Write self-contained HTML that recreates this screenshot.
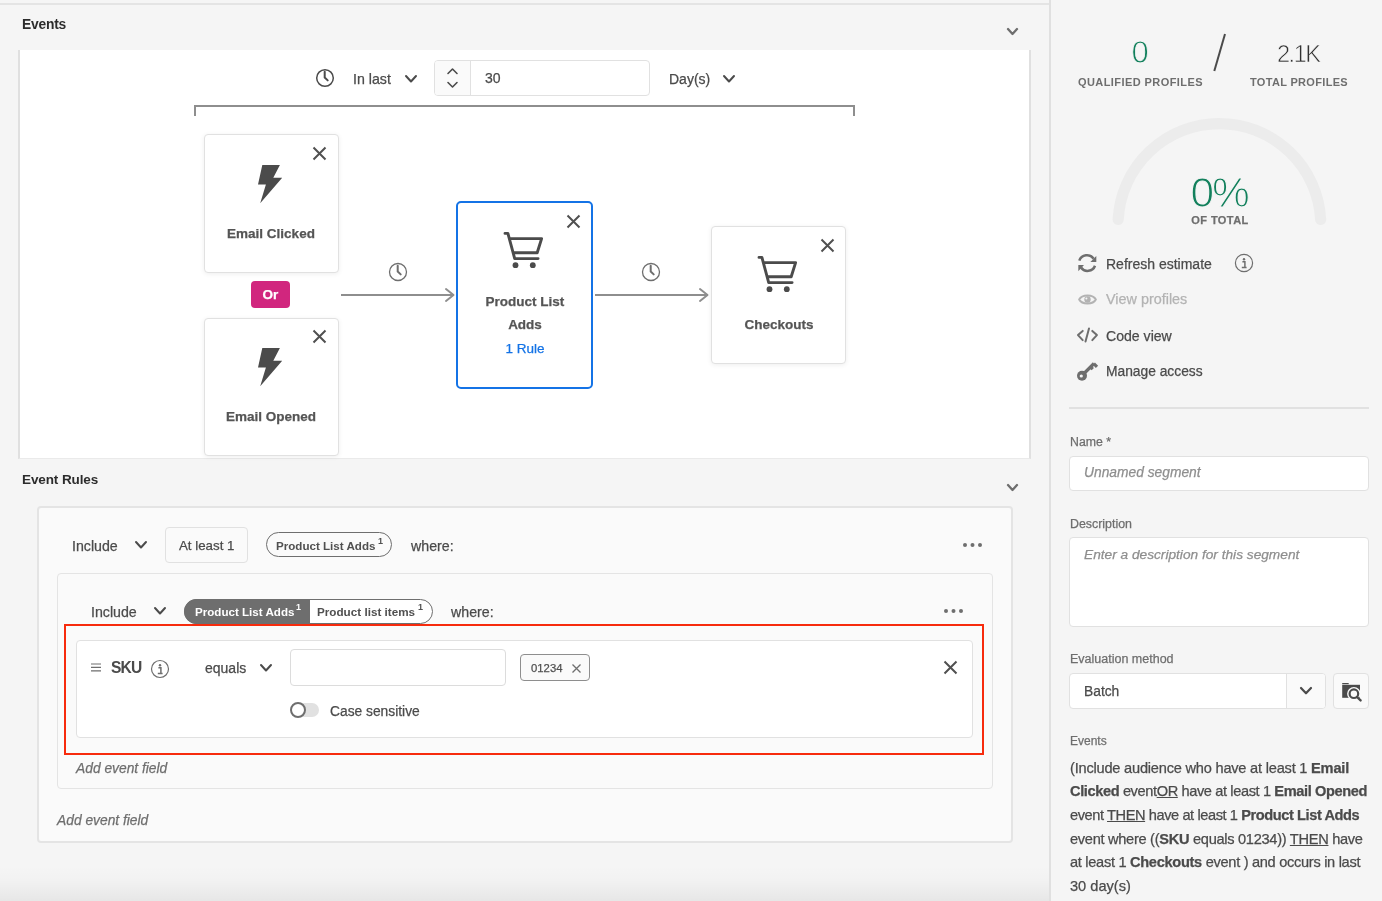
<!DOCTYPE html><html><head><meta charset="utf-8"><style>
html,body{margin:0;padding:0;width:1382px;height:901px;overflow:hidden;background:#f5f5f5;font-family:"Liberation Sans", sans-serif;}
.t{position:absolute;line-height:1;white-space:nowrap;will-change:transform;-webkit-text-stroke:0.25px currentColor;}
svg{overflow:visible}
</style></head><body>
<div style="position:absolute;left:0px;top:0px;width:1049px;height:901px;box-sizing:border-box;background:#f5f5f5"></div>
<div style="position:absolute;left:0px;top:3px;width:1049px;height:2px;box-sizing:border-box;background:#e4e4e4"></div>
<div style="position:absolute;left:0px;top:866px;width:1049px;height:35px;box-sizing:border-box;background:linear-gradient(to bottom, rgba(0,0,0,0) 0%, rgba(0,0,0,0.012) 40%, rgba(0,0,0,0.06) 100%)"></div>
<div style="position:absolute;left:1049px;top:0px;width:2px;height:901px;box-sizing:border-box;background:#e0e0e0"></div>
<div class="t" style="left:22px;top:17.62px;font-size:13.8px;font-weight:700;color:#2c2c2c;font-style:normal;letter-spacing:-0.200px;-webkit-text-stroke:0;">Events</div>
<svg style="position:absolute;left:1006.0px;top:26.7px;" width="13" height="9" viewBox="0 0 13 9" fill="none"><path d="M2 2 L6.5 7 L11 2" stroke="#6e6e6e" stroke-width="2.3" stroke-linecap="round" stroke-linejoin="round"/></svg>
<div style="position:absolute;left:18px;top:50px;width:1013px;height:409px;box-sizing:border-box;background:#fff;border-left:2px solid #e0e0e0;border-right:2px solid #e0e0e0;border-bottom:1px solid #eaeaea"></div>
<svg style="position:absolute;left:314.0px;top:67.0px;" width="22" height="22" viewBox="0 0 22 22" fill="none"><circle cx="11.0" cy="11.0" r="8.3" stroke="#4b4b4b" stroke-width="1.5"/><path d="M10.7 4.8 L10.7 10.5 L13.7 13.4" stroke="#4b4b4b" stroke-width="2" stroke-linecap="round" stroke-linejoin="round"/></svg>
<div class="t" style="left:353px;top:71.98px;font-size:14.2px;font-weight:400;color:#4b4b4b;font-style:normal;letter-spacing:0.000px;">In last</div>
<svg style="position:absolute;left:403.5px;top:73.75px;" width="14" height="9.5" viewBox="0 0 14 9.5" fill="none"><path d="M2 2 L7.0 7.5 L12 2" stroke="#4b4b4b" stroke-width="2" stroke-linecap="round" stroke-linejoin="round"/></svg>
<div style="position:absolute;left:434px;top:60px;width:216px;height:36px;box-sizing:border-box;border:1px solid #e1e1e1;border-radius:4px;background:#fff"></div>
<div style="position:absolute;left:435px;top:61px;width:36px;height:34px;box-sizing:border-box;background:#fafafa;border-right:1px solid #e1e1e1;border-radius:3px 0 0 3px"></div>
<svg style="position:absolute;left:446px;top:67px;" width="12" height="22" viewBox="0 0 12 22" fill="none"><path d="M2 6.5 L6.5 2 L11 6.5 M2 15.5 L6.5 20 L11 15.5" stroke="#4b4b4b" stroke-width="1.6" stroke-linecap="round" stroke-linejoin="round"/></svg>
<div class="t" style="left:485px;top:71.35px;font-size:14px;font-weight:400;color:#4b4b4b;font-style:normal;letter-spacing:0.000px;">30</div>
<div class="t" style="left:669px;top:72.15px;font-size:14px;font-weight:400;color:#4b4b4b;font-style:normal;letter-spacing:0.000px;">Day(s)</div>
<svg style="position:absolute;left:722.0px;top:73.75px;" width="14" height="9.5" viewBox="0 0 14 9.5" fill="none"><path d="M2 2 L7.0 7.5 L12 2" stroke="#4b4b4b" stroke-width="2" stroke-linecap="round" stroke-linejoin="round"/></svg>
<div style="position:absolute;left:194px;top:105px;width:661px;height:2px;box-sizing:border-box;background:#8e8e8e"></div>
<div style="position:absolute;left:194px;top:105px;width:2px;height:11px;box-sizing:border-box;background:#8e8e8e"></div>
<div style="position:absolute;left:853px;top:105px;width:2px;height:11px;box-sizing:border-box;background:#8e8e8e"></div>
<div style="position:absolute;left:204px;top:134px;width:135px;height:139px;box-sizing:border-box;background:#fff;border:1px solid #e1e1e1;border-radius:4px;box-shadow:0 1px 5px rgba(0,0,0,0.07)"></div>
<svg style="position:absolute;left:312px;top:146px;" width="15" height="15" viewBox="0 0 15 15" fill="none"><path d="M1.5 1.5 L13.5 13.5 M13.5 1.5 L1.5 13.5" stroke="#505050" stroke-width="2" stroke-linecap="butt"/></svg>
<svg style="position:absolute;left:256.8px;top:163.9px;" width="27" height="41" viewBox="0 0 27 41" fill="none"><polygon points="5.3,1.0 22.9,1.0 16.3,13.8 25.2,13.8 3.2,39.2 8.9,20.6 1.0,20.6" fill="#4b4b4b"/></svg>
<div class="t" style="left:206.0px;width:130px;text-align:center;top:226.87px;font-size:13.5px;font-weight:700;color:#555;font-style:normal;letter-spacing:0px;">Email Clicked</div>
<div style="position:absolute;left:251px;top:281px;width:39px;height:27px;box-sizing:border-box;background:#d1267e;border-radius:4px"></div>
<div class="t" style="left:251.0px;width:39px;text-align:center;top:287.97px;font-size:13.5px;font-weight:700;color:#fff;font-style:normal;letter-spacing:0px;">Or</div>
<div style="position:absolute;left:204px;top:318px;width:135px;height:138px;box-sizing:border-box;background:#fff;border:1px solid #e1e1e1;border-radius:4px;box-shadow:0 1px 5px rgba(0,0,0,0.07)"></div>
<svg style="position:absolute;left:312px;top:329px;" width="15" height="15" viewBox="0 0 15 15" fill="none"><path d="M1.5 1.5 L13.5 13.5 M13.5 1.5 L1.5 13.5" stroke="#505050" stroke-width="2" stroke-linecap="butt"/></svg>
<svg style="position:absolute;left:256.8px;top:346.5px;" width="27" height="41" viewBox="0 0 27 41" fill="none"><polygon points="5.3,1.0 22.9,1.0 16.3,13.8 25.2,13.8 3.2,39.2 8.9,20.6 1.0,20.6" fill="#4b4b4b"/></svg>
<div class="t" style="left:206.0px;width:130px;text-align:center;top:410.07px;font-size:13.5px;font-weight:700;color:#555;font-style:normal;letter-spacing:0px;">Email Opened</div>
<div style="position:absolute;left:341px;top:294px;width:112px;height:2px;box-sizing:border-box;background:#8e8e8e"></div>
<svg style="position:absolute;left:444px;top:287px;" width="12" height="16" viewBox="0 0 12 16" fill="none"><path d="M2 2 L9.5 8 L2 14" stroke="#8e8e8e" stroke-width="2" stroke-linecap="round" stroke-linejoin="round"/></svg>
<svg style="position:absolute;left:387.0px;top:261.0px;" width="22" height="22" viewBox="0 0 22 22" fill="none"><circle cx="11.0" cy="11.0" r="8.5" stroke="#6e6e6e" stroke-width="1.3"/><path d="M10.7 4.8 L10.7 10.5 L13.7 13.4" stroke="#6e6e6e" stroke-width="2" stroke-linecap="round" stroke-linejoin="round"/></svg>
<div style="position:absolute;left:456px;top:201px;width:137px;height:188px;box-sizing:border-box;background:#fff;border:2px solid #1473e6;border-radius:5px"></div>
<svg style="position:absolute;left:566px;top:214px;" width="15" height="15" viewBox="0 0 15 15" fill="none"><path d="M1.5 1.5 L13.5 13.5 M13.5 1.5 L1.5 13.5" stroke="#505050" stroke-width="2" stroke-linecap="butt"/></svg>
<svg style="position:absolute;left:503.4px;top:230.6px;" width="41" height="40" viewBox="0 0 41 40" fill="none"><g transform="translate(1,1)"><path d="M1 1.4 L3.9 1.4 L10.7 26.6 L34.1 26.6 M5.3 6.6 L37.6 6.6 L33.2 20.8 L9.2 20.8" stroke="#4b4b4b" stroke-width="2.9" stroke-linecap="round" stroke-linejoin="round"/><circle cx="11.5" cy="33.2" r="2.9" fill="#4b4b4b"/><circle cx="28.8" cy="33.2" r="2.9" fill="#4b4b4b"/></g></svg>
<div class="t" style="left:459.5px;width:130px;text-align:center;top:294.57px;font-size:13.5px;font-weight:700;color:#555;font-style:normal;letter-spacing:0px;">Product List</div>
<div class="t" style="left:459.5px;width:130px;text-align:center;top:317.77px;font-size:13.5px;font-weight:700;color:#555;font-style:normal;letter-spacing:0px;">Adds</div>
<div class="t" style="left:459.5px;width:130px;text-align:center;top:341.77px;font-size:13.5px;font-weight:400;color:#1473e6;font-style:normal;letter-spacing:0px;">1 Rule</div>
<div style="position:absolute;left:595px;top:294px;width:112px;height:2px;box-sizing:border-box;background:#8e8e8e"></div>
<svg style="position:absolute;left:698px;top:287px;" width="12" height="16" viewBox="0 0 12 16" fill="none"><path d="M2 2 L9.5 8 L2 14" stroke="#8e8e8e" stroke-width="2" stroke-linecap="round" stroke-linejoin="round"/></svg>
<svg style="position:absolute;left:640.0px;top:261.0px;" width="22" height="22" viewBox="0 0 22 22" fill="none"><circle cx="11.0" cy="11.0" r="8.5" stroke="#6e6e6e" stroke-width="1.3"/><path d="M10.7 4.8 L10.7 10.5 L13.7 13.4" stroke="#6e6e6e" stroke-width="2" stroke-linecap="round" stroke-linejoin="round"/></svg>
<div style="position:absolute;left:711px;top:226px;width:135px;height:138px;box-sizing:border-box;background:#fff;border:1px solid #e1e1e1;border-radius:4px;box-shadow:0 1px 5px rgba(0,0,0,0.07)"></div>
<svg style="position:absolute;left:820px;top:237.5px;" width="15" height="15" viewBox="0 0 15 15" fill="none"><path d="M1.5 1.5 L13.5 13.5 M13.5 1.5 L1.5 13.5" stroke="#505050" stroke-width="2" stroke-linecap="butt"/></svg>
<svg style="position:absolute;left:757.2px;top:254.5px;" width="41" height="40" viewBox="0 0 41 40" fill="none"><g transform="translate(1,1)"><path d="M1 1.4 L3.9 1.4 L10.7 26.6 L34.1 26.6 M5.3 6.6 L37.6 6.6 L33.2 20.8 L9.2 20.8" stroke="#4b4b4b" stroke-width="2.9" stroke-linecap="round" stroke-linejoin="round"/><circle cx="11.5" cy="33.2" r="2.9" fill="#4b4b4b"/><circle cx="28.8" cy="33.2" r="2.9" fill="#4b4b4b"/></g></svg>
<div class="t" style="left:713.5px;width:130px;text-align:center;top:318.07px;font-size:13.5px;font-weight:700;color:#555;font-style:normal;letter-spacing:0px;">Checkouts</div>
<div class="t" style="left:21.6px;top:473.37px;font-size:13.5px;font-weight:700;color:#2c2c2c;font-style:normal;letter-spacing:-0.100px;-webkit-text-stroke:0;">Event Rules</div>
<svg style="position:absolute;left:1006.0px;top:482.7px;" width="13" height="9" viewBox="0 0 13 9" fill="none"><path d="M2 2 L6.5 7 L11 2" stroke="#6e6e6e" stroke-width="2.3" stroke-linecap="round" stroke-linejoin="round"/></svg>
<div style="position:absolute;left:37px;top:506px;width:976px;height:337px;box-sizing:border-box;background:#fafafa;border:2px solid #e4e4e4;border-radius:4px"></div>
<div class="t" style="left:71.6px;top:538.68px;font-size:14.2px;font-weight:400;color:#4b4b4b;font-style:normal;letter-spacing:0.000px;">Include</div>
<svg style="position:absolute;left:134.0px;top:540.25px;" width="14" height="9.5" viewBox="0 0 14 9.5" fill="none"><path d="M2 2 L7.0 7.5 L12 2" stroke="#4b4b4b" stroke-width="2" stroke-linecap="round" stroke-linejoin="round"/></svg>
<div style="position:absolute;left:165px;top:527px;width:83px;height:36px;box-sizing:border-box;border:1px solid #e1e1e1;border-radius:4px;background:#fafafa"></div>
<div class="t" style="left:178.5px;top:539.44px;font-size:13.3px;font-weight:400;color:#4b4b4b;font-style:normal;letter-spacing:0.000px;">At least 1</div>
<div style="position:absolute;left:266px;top:532px;width:126px;height:25px;box-sizing:border-box;border:1px solid #6e6e6e;border-radius:13px"></div>
<div class="t" style="left:276.3px;top:539.68px;font-size:11.6px;font-weight:700;color:#505050;font-style:normal;letter-spacing:0.000px;-webkit-text-stroke:0;">Product List Adds</div>
<div class="t" style="left:378.2px;top:536.88px;font-size:9px;font-weight:700;color:#505050;font-style:normal;letter-spacing:0.000px;-webkit-text-stroke:0;">1</div>
<div class="t" style="left:411px;top:538.68px;font-size:14.2px;font-weight:400;color:#4b4b4b;font-style:normal;letter-spacing:0.000px;">where:</div>
<svg style="position:absolute;left:962px;top:541px;" width="21" height="8" viewBox="0 0 21 8" fill="none"><circle cx="3" cy="4" r="2" fill="#6e6e6e"/><circle cx="10.5" cy="4" r="2" fill="#6e6e6e"/><circle cx="18" cy="4" r="2" fill="#6e6e6e"/></svg>
<div style="position:absolute;left:57px;top:573px;width:936px;height:216px;box-sizing:border-box;background:#fafafa;border:1px solid #e4e4e4;border-radius:4px"></div>
<div class="t" style="left:90.7px;top:604.88px;font-size:14.2px;font-weight:400;color:#4b4b4b;font-style:normal;letter-spacing:0.000px;">Include</div>
<svg style="position:absolute;left:153.0px;top:606.25px;" width="14" height="9.5" viewBox="0 0 14 9.5" fill="none"><path d="M2 2 L7.0 7.5 L12 2" stroke="#4b4b4b" stroke-width="2" stroke-linecap="round" stroke-linejoin="round"/></svg>
<div style="position:absolute;left:184px;top:599px;width:249px;height:25px;box-sizing:border-box;border:1px solid #6e6e6e;border-radius:13px;background:#fff;overflow:hidden"></div>
<div style="position:absolute;left:184px;top:599px;width:126px;height:25px;box-sizing:border-box;background:#6e6e6e;border-radius:13px 0 0 13px"></div>
<div class="t" style="left:194.5px;top:605.98px;font-size:11.6px;font-weight:700;color:#fff;font-style:normal;letter-spacing:0.000px;-webkit-text-stroke:0;">Product List Adds</div>
<div class="t" style="left:296.1px;top:603.18px;font-size:9px;font-weight:700;color:#fff;font-style:normal;letter-spacing:0.000px;-webkit-text-stroke:0;">1</div>
<div class="t" style="left:316.7px;top:605.90px;font-size:11.7px;font-weight:700;color:#505050;font-style:normal;letter-spacing:0.000px;-webkit-text-stroke:0;">Product list items</div>
<div class="t" style="left:417.5px;top:603.18px;font-size:9px;font-weight:700;color:#505050;font-style:normal;letter-spacing:0.000px;-webkit-text-stroke:0;">1</div>
<div class="t" style="left:451px;top:604.88px;font-size:14.2px;font-weight:400;color:#4b4b4b;font-style:normal;letter-spacing:0.000px;">where:</div>
<svg style="position:absolute;left:943px;top:607px;" width="21" height="8" viewBox="0 0 21 8" fill="none"><circle cx="3" cy="4" r="2" fill="#6e6e6e"/><circle cx="10.5" cy="4" r="2" fill="#6e6e6e"/><circle cx="18" cy="4" r="2" fill="#6e6e6e"/></svg>
<div style="position:absolute;left:64px;top:624px;width:920px;height:131px;box-sizing:border-box;border:2px solid #f72b0d"></div>
<div style="position:absolute;left:76px;top:640px;width:897px;height:98px;box-sizing:border-box;background:#fff;border:1px solid #e1e1e1;border-radius:4px"></div>
<svg style="position:absolute;left:90px;top:662px;" width="12" height="10" viewBox="0 0 12 10" fill="none"><path d="M1 2 L11 2 M1 5.4 L11 5.4 M1 8.8 L11 8.8" stroke="#6e6e6e" stroke-width="1.2"/></svg>
<div class="t" style="left:110.8px;top:660.29px;font-size:15.6px;font-weight:700;color:#4b4b4b;font-style:normal;letter-spacing:-0.812px;-webkit-text-stroke:0;">SKU</div>
<svg style="position:absolute;left:149.0px;top:657.5px;" width="22" height="22" viewBox="0 0 22 22" fill="none"><circle cx="11.0" cy="11.0" r="8.5" stroke="#6e6e6e" stroke-width="1.2"/><circle cx="11.0" cy="7.2" r="1.2" fill="#6e6e6e"/><path d="M9.4 9.8 L11.9 9.8 L11.9 15.2 M8.8 15.6 L13.6 15.6" stroke="#6e6e6e" stroke-width="1.5"/></svg>
<div class="t" style="left:205px;top:661.15px;font-size:14px;font-weight:400;color:#4b4b4b;font-style:normal;letter-spacing:0.000px;">equals</div>
<svg style="position:absolute;left:258.8px;top:662.75px;" width="14" height="9.5" viewBox="0 0 14 9.5" fill="none"><path d="M2 2 L7.0 7.5 L12 2" stroke="#4b4b4b" stroke-width="2" stroke-linecap="round" stroke-linejoin="round"/></svg>
<div style="position:absolute;left:290px;top:649px;width:216px;height:37px;box-sizing:border-box;border:1px solid #dcdcdc;border-radius:4px;background:#fff"></div>
<div style="position:absolute;left:520px;top:654px;width:70px;height:27px;box-sizing:border-box;border:1px solid #8e8e8e;border-radius:4px;background:#fafafa"></div>
<div class="t" style="left:531px;top:663.43px;font-size:11.3px;font-weight:400;color:#505050;font-style:normal;letter-spacing:0.016px;">01234</div>
<svg style="position:absolute;left:570.5px;top:663px;" width="11" height="11" viewBox="0 0 11 11" fill="none"><path d="M1.5 1.5 L9.5 9.5 M9.5 1.5 L1.5 9.5" stroke="#6e6e6e" stroke-width="1.3"/></svg>
<svg style="position:absolute;left:942.5px;top:660px;" width="15" height="15" viewBox="0 0 15 15" fill="none"><path d="M1.5 1.5 L13.5 13.5 M13.5 1.5 L1.5 13.5" stroke="#505050" stroke-width="2" stroke-linecap="butt"/></svg>
<div style="position:absolute;left:295px;top:703px;width:24px;height:14px;box-sizing:border-box;background:#e1e1e1;border-radius:7px"></div>
<div style="position:absolute;left:290px;top:702px;width:16px;height:16px;box-sizing:border-box;background:#fff;border:2px solid #6e6e6e;border-radius:50%"></div>
<div class="t" style="left:330.4px;top:704.62px;font-size:13.8px;font-weight:400;color:#4b4b4b;font-style:normal;letter-spacing:0.000px;">Case sensitive</div>
<div class="t" style="left:76.1px;top:761.82px;font-size:13.8px;font-weight:400;color:#6e6e6e;font-style:italic;letter-spacing:0.000px;">Add event field</div>
<div class="t" style="left:56.8px;top:813.72px;font-size:13.8px;font-weight:400;color:#6e6e6e;font-style:italic;letter-spacing:0.000px;">Add event field</div>
<div style="position:absolute;left:1051px;top:0px;width:331px;height:901px;box-sizing:border-box;background:#f5f5f5"></div>
<div class="t" style="left:1110.0px;width:60px;text-align:center;top:36.76px;font-size:31px;font-weight:400;color:#12805c;font-style:normal;letter-spacing:0px;-webkit-text-stroke:0.8px #f5f5f5">0</div>
<svg style="position:absolute;left:1210px;top:30px;" width="20" height="45" viewBox="0 0 20 45" fill="none"><path d="M15 4 L4.3 41" stroke="#4b4b4b" stroke-width="2"/></svg>
<div class="t" style="left:1277.3px;top:43.22px;font-size:23.6px;font-weight:400;color:#323232;font-style:normal;letter-spacing:-1.512px;-webkit-text-stroke:0.6px #f5f5f5">2.1K</div>
<div class="t" style="left:1077.5px;top:76.89px;font-size:11px;font-weight:700;color:#6e6e6e;font-style:normal;letter-spacing:0.420px;-webkit-text-stroke:0;">QUALIFIED PROFILES</div>
<div class="t" style="left:1249.5px;top:76.89px;font-size:11px;font-weight:700;color:#6e6e6e;font-style:normal;letter-spacing:0.320px;-webkit-text-stroke:0;">TOTAL PROFILES</div>
<svg style="position:absolute;left:1100px;top:100px;" width="240" height="140" viewBox="0 0 240 140" fill="none"><path d="M18.15 119.50 A 101.4 101.4 0 0 1 220.65 119.50" stroke="#ececec" stroke-width="11.2" stroke-linecap="round"/></svg>
<div class="t" style="left:1158.5px;width:120px;text-align:center;top:172.22px;font-size:42.5px;font-weight:400;color:#12805c;font-style:normal;letter-spacing:-2.2px;-webkit-text-stroke:1.1px #f5f5f5">0%</div>
<div class="t" style="left:1159.5px;width:120px;text-align:center;top:215.49px;font-size:11px;font-weight:700;color:#6e6e6e;font-style:normal;letter-spacing:0.43px;">OF TOTAL</div>
<svg style="position:absolute;left:1078px;top:254px;" width="19" height="19" viewBox="0 0 19 19" fill="none"><path d="M1.3 6.7 A 8 8 0 0 1 15.6 4.8" stroke="#6e6e6e" stroke-width="2.5"/><polygon points="12.4,8 18.3,8 18.3,2" fill="#6e6e6e"/><path d="M17 11.7 A 8 8 0 0 1 3 13.6" stroke="#6e6e6e" stroke-width="2.5"/><polygon points="0.3,11 6,11 0.3,17.3" fill="#6e6e6e"/></svg>
<div class="t" style="left:1106px;top:256.75px;font-size:14px;font-weight:400;color:#4b4b4b;font-style:normal;letter-spacing:0.000px;">Refresh estimate</div>
<svg style="position:absolute;left:1233.0px;top:252.0px;" width="22" height="22" viewBox="0 0 22 22" fill="none"><circle cx="11.0" cy="11.0" r="8.6" stroke="#6e6e6e" stroke-width="1.2"/><circle cx="11.0" cy="7.2" r="1.2" fill="#6e6e6e"/><path d="M9.4 9.8 L11.9 9.8 L11.9 15.2 M8.8 15.6 L13.6 15.6" stroke="#6e6e6e" stroke-width="1.5"/></svg>
<svg style="position:absolute;left:1078px;top:293px;" width="19" height="13" viewBox="0 0 19 13" fill="none"><path d="M1.2 6.5 C4 1.2 15 1.2 17.8 6.5 C15 11.8 4 11.8 1.2 6.5 Z" stroke="#b3b3b3" stroke-width="2.1" stroke-linejoin="round"/><circle cx="9.5" cy="6.5" r="3.2" fill="#b3b3b3"/><circle cx="8.4" cy="5.4" r="1" fill="#f5f5f5"/></svg>
<div class="t" style="left:1106px;top:292.31px;font-size:14.4px;font-weight:400;color:#b3b3b3;font-style:normal;letter-spacing:0.000px;">View profiles</div>
<svg style="position:absolute;left:1076px;top:327px;" width="23" height="16" viewBox="0 0 23 16" fill="none"><path d="M6.7 3.9 L2 8.1 L6.7 13.1 M16.3 3.9 L20.9 8.1 L16.3 13.1 M13 1.4 L9.5 14.5" stroke="#6e6e6e" stroke-width="2" stroke-linecap="round" stroke-linejoin="round"/></svg>
<div class="t" style="left:1106px;top:328.56px;font-size:14.1px;font-weight:400;color:#4b4b4b;font-style:normal;letter-spacing:0.000px;">Code view</div>
<svg style="position:absolute;left:1076px;top:361px;" width="23" height="21" viewBox="0 0 23 21" fill="none"><circle cx="6" cy="14.7" r="5" fill="#6e6e6e"/><circle cx="5.3" cy="15" r="1.6" fill="#f5f5f5"/><path d="M8.5 12 L18 2.5 M17.8 2.7 L21 5.9 M14.6 6 L16.8 8.2" stroke="#6e6e6e" stroke-width="3.2"/></svg>
<div class="t" style="left:1106px;top:364.92px;font-size:13.8px;font-weight:400;color:#4b4b4b;font-style:normal;letter-spacing:0.000px;">Manage access</div>
<div style="position:absolute;left:1069px;top:407px;width:300px;height:2px;box-sizing:border-box;background:#e1e1e1"></div>
<div class="t" style="left:1069.6px;top:435.79px;font-size:12.3px;font-weight:400;color:#6e6e6e;font-style:normal;letter-spacing:0.000px;">Name *</div>
<div style="position:absolute;left:1069px;top:456px;width:300px;height:35px;box-sizing:border-box;background:#fff;border:1px solid #e1e1e1;border-radius:4px"></div>
<div class="t" style="left:1084px;top:466.32px;font-size:13.8px;font-weight:400;color:#8e8e8e;font-style:italic;letter-spacing:0.000px;">Unnamed segment</div>
<div class="t" style="left:1069.8px;top:517.50px;font-size:12.4px;font-weight:400;color:#6e6e6e;font-style:normal;letter-spacing:0.000px;">Description</div>
<div style="position:absolute;left:1069px;top:537px;width:300px;height:90px;box-sizing:border-box;background:#fff;border:1px solid #e1e1e1;border-radius:4px"></div>
<div class="t" style="left:1084px;top:547.50px;font-size:13.7px;font-weight:400;color:#8e8e8e;font-style:italic;letter-spacing:0.000px;">Enter a description for this segment</div>
<div class="t" style="left:1069.8px;top:653.22px;font-size:12.5px;font-weight:400;color:#6e6e6e;font-style:normal;letter-spacing:0.000px;">Evaluation method</div>
<div style="position:absolute;left:1069px;top:673px;width:257px;height:36px;box-sizing:border-box;background:#fff;border:1px solid #e1e1e1;border-radius:4px"></div>
<div style="position:absolute;left:1286px;top:674px;width:39px;height:34px;box-sizing:border-box;background:#fafafa;border-left:1px solid #e1e1e1;border-radius:0 3px 3px 0"></div>
<div class="t" style="left:1083.5px;top:684.92px;font-size:13.8px;font-weight:400;color:#4b4b4b;font-style:normal;letter-spacing:0.000px;">Batch</div>
<svg style="position:absolute;left:1299.3px;top:686.35px;" width="14" height="9.3" viewBox="0 0 14 9.3" fill="none"><path d="M2 2 L7.0 7.3 L12 2" stroke="#4b4b4b" stroke-width="2.2" stroke-linecap="round" stroke-linejoin="round"/></svg>
<div style="position:absolute;left:1333px;top:673px;width:36px;height:36px;box-sizing:border-box;background:#fafafa;border:1px solid #e1e1e1;border-radius:4px"></div>
<svg style="position:absolute;left:1340px;top:680px;" width="24" height="24" viewBox="0 0 24 24" fill="none"><path d="M2.2 3 L8.7 3 L8.7 4.2 L2.2 4.2 Z" fill="#4b4b4b"/><path d="M2.2 4.8 L20 4.8 L20 17.8 L2.2 17.8 Z" fill="#4b4b4b"/><circle cx="13.9" cy="13.7" r="6.8" fill="#fafafa"/><circle cx="13.9" cy="13.7" r="4.3" stroke="#4b4b4b" stroke-width="2.2"/><path d="M17 17 L20.6 20.4" stroke="#4b4b4b" stroke-width="2.4" stroke-linecap="round"/></svg>
<div class="t" style="left:1069.7px;top:735.04px;font-size:12px;font-weight:400;color:#6e6e6e;font-style:normal;letter-spacing:0.000px;">Events</div>
<div class="t" style="left:1069.7px;top:760.74px;font-size:14.6px;font-weight:400;color:#4b4b4b;font-style:normal;letter-spacing:-0.210px;">(Include audience who have at least 1 <b>Email</b></div>
<div class="t" style="left:1069.7px;top:784.34px;font-size:14.6px;font-weight:400;color:#4b4b4b;font-style:normal;letter-spacing:-0.385px;"><b>Clicked</b> event<u>OR</u> have at least 1 <b>Email Opened</b></div>
<div class="t" style="left:1069.7px;top:807.94px;font-size:14.6px;font-weight:400;color:#4b4b4b;font-style:normal;letter-spacing:-0.412px;">event <u>THEN</u> have at least 1 <b>Product List Adds</b></div>
<div class="t" style="left:1069.7px;top:831.54px;font-size:14.6px;font-weight:400;color:#4b4b4b;font-style:normal;letter-spacing:-0.287px;">event where ((<b>SKU</b> equals 01234)) <u>THEN</u> have</div>
<div class="t" style="left:1069.7px;top:855.14px;font-size:14.6px;font-weight:400;color:#4b4b4b;font-style:normal;letter-spacing:-0.298px;">at least 1 <b>Checkouts</b> event ) and occurs in last</div>
<div class="t" style="left:1069.7px;top:878.74px;font-size:14.6px;font-weight:400;color:#4b4b4b;font-style:normal;letter-spacing:0.000px;">30 day(s)</div>
</body></html>
